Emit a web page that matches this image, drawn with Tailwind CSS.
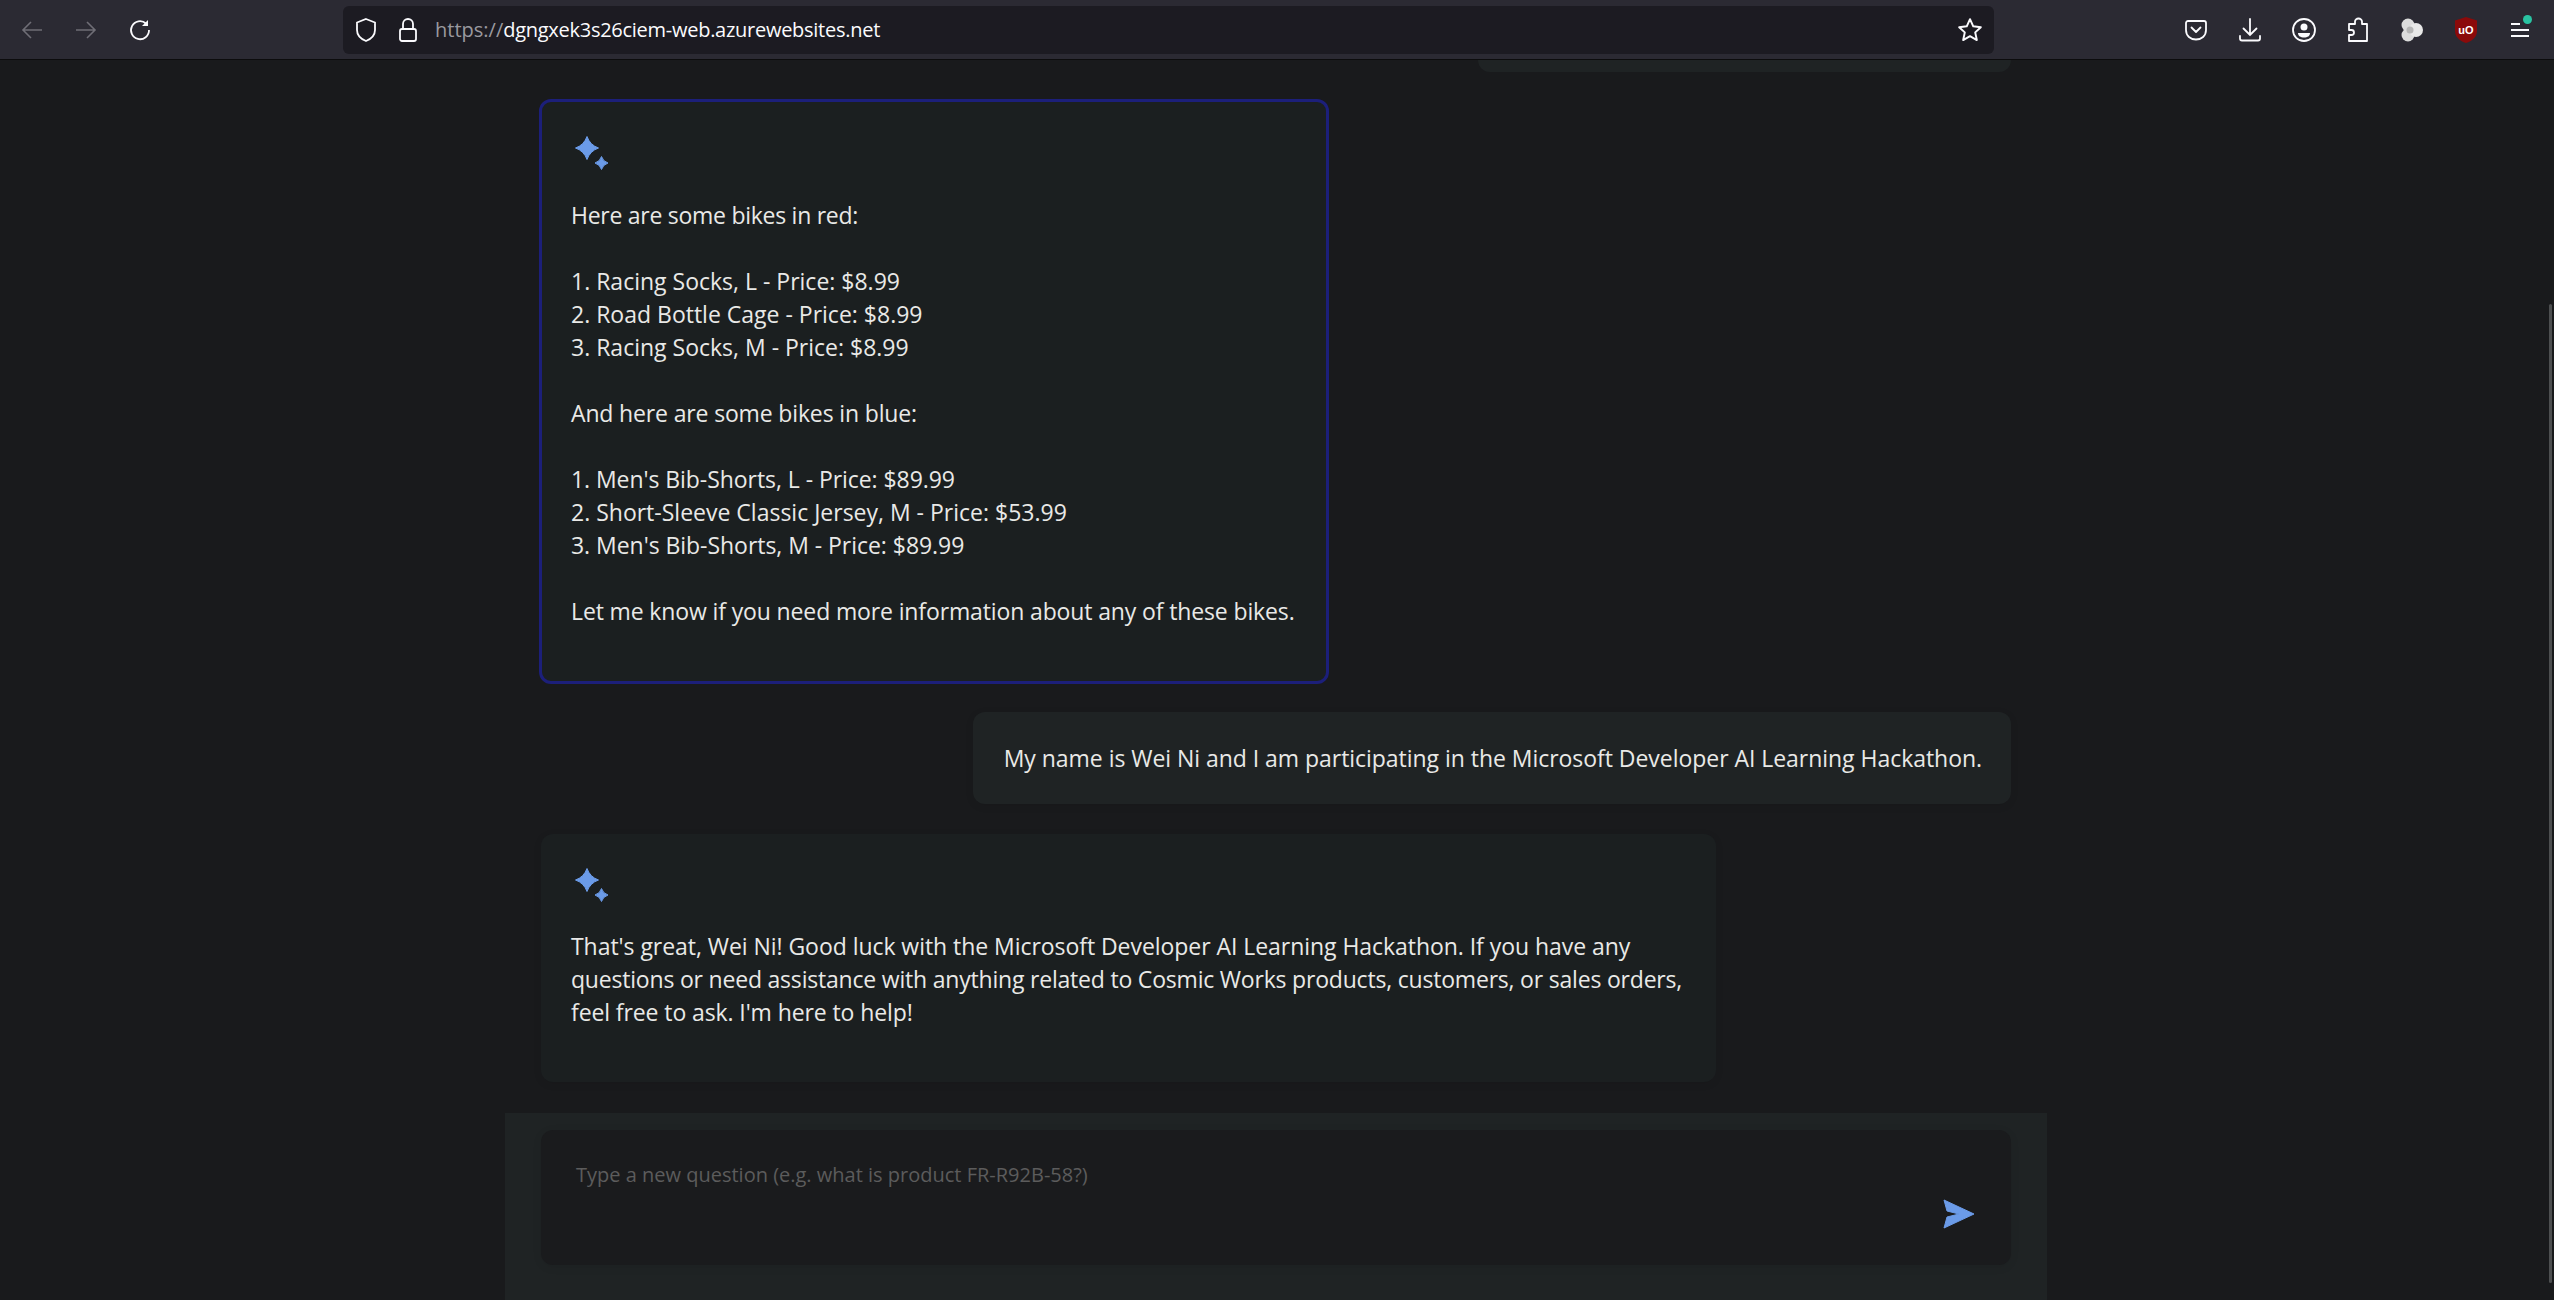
<!DOCTYPE html>
<html lang="en">
<head>
    <meta charset="UTF-8" />
    <title>Cosmic Works Chat</title>
    <script src="https://cdn.jsdelivr.net/npm/@tailwindcss/browser@4"></script>
</head>
<body class="h-screen overflow-hidden bg-[#191a1c] font-['Open_Sans',sans-serif] text-[#e9e9e7]">

    <!-- Browser toolbar -->
    <header class="h-[60px] flex items-center bg-[#2b2a33] border-b border-[#0c0c0d]">
        <div class="flex items-center w-[343px] pl-[20px] gap-[30px]">
            <svg class="w-6 h-6" viewBox="0 0 24 24" fill="none" stroke="#6f6e76" stroke-width="1.6"><path d="M22 12H3M11 4l-8 8 8 8"/></svg>
            <svg class="w-6 h-6" viewBox="0 0 24 24" fill="none" stroke="#6f6e76" stroke-width="1.6"><path d="M2 12h19M13 4l8 8-8 8"/></svg>
            <svg class="w-6 h-6" viewBox="0 0 24 24" fill="none" stroke="#fbfbfe" stroke-width="1.8"><path d="M18 5.500A9 9 0 1 0 21 12"/><path d="M20 2v6h-6z" fill="#fbfbfe" stroke="none"/></svg>
        </div>
        <div class="w-[1651px] h-[48px] rounded-md bg-[#1c1b22] flex items-center pl-[11px] pr-[11px]">
            <svg class="w-[24px] h-[26px]" viewBox="0 0 24 26" fill="none" stroke="#fbfbfe" stroke-width="1.8"><path d="M12 2l9 3.500V13c0 5-4 9-9 11-5-2-9-6-9-11V5.500z"/></svg>
            <svg class="w-[20px] h-[26px] ml-[20px]" viewBox="0 0 20 26" fill="none" stroke="#fbfbfe" stroke-width="1.8"><rect x="2" y="12" width="16" height="12" rx="2"/><path d="M5 12V7a5 5 0 0 1 10 0v5"/></svg>
            <span class="ml-[17px] text-[20px] text-[#9a999f]">https://<span class="text-[#fbfbfe] tracking-[-0.27px]">dgngxek3s26ciem-web.azurewebsites.net</span></span>
            <svg class="ml-auto w-[26px] h-[26px]" viewBox="0 0 24 24" fill="none" stroke="#fbfbfe" stroke-width="1.8" stroke-linejoin="round"><path d="M12 2l3 6.600 7 .8-5.200 4.800 1.500 7.100L12 17.700l-6.300 3.600 1.500-7.100L2 9.400l7-.8z"/></svg>
        </div>
        <div class="flex items-center pl-[189px] gap-[28px]">
            <!-- pocket -->
            <svg class="w-[26px] h-[26px]" viewBox="0 0 26 26" fill="none" stroke="#fbfbfe" stroke-width="1.8" stroke-linejoin="round" stroke-linecap="round"><path d="M5 4h16a2 2 0 0 1 2 2v7c0 6-4.500 9.500-10 9.500S3 19 3 13V6a2 2 0 0 1 2-2z"/><path d="M8.500 10.500l4.500 4.500 4.500-4.500"/></svg>
            <!-- downloads -->
            <svg class="w-[26px] h-[26px]" viewBox="0 0 26 26" fill="none" stroke="#fbfbfe" stroke-width="1.8" stroke-linecap="round"><path d="M13 2v16M6.500 11.500L13 18l6.500-6.500M3 19v2.500a2 2 0 0 0 2 2h16a2 2 0 0 0 2-2V19"/></svg>
            <!-- account -->
            <svg class="w-[26px] h-[26px]" viewBox="0 0 26 26" fill="none" stroke="#fbfbfe" stroke-width="1.8"><circle cx="13" cy="13" r="11"/><circle cx="13" cy="10" r="3.500" fill="#fbfbfe" stroke="none"/><path d="M7 16h12c0 3-2.500 4.500-6 4.500S7 19 7 16z" fill="#fbfbfe" stroke="none"/></svg>
            <!-- extensions -->
            <svg class="w-[26px] h-[26px]" viewBox="0 0 26 26" fill="none" stroke="#fbfbfe" stroke-width="1.8" stroke-linejoin="round"><path d="M10 7V4.500a3.500 3 0 0 1 7 0V7h5v17H4v-6h2.500a2.500 2.500 0 0 0 0-5H4V7z"/></svg>
            <!-- extension blob -->
            <svg class="w-[26px] h-[26px]" viewBox="0 0 26 26"><circle cx="9" cy="8" r="6.500" fill="#dcdcdc"/><circle cx="9" cy="18" r="6.500" fill="#dcdcdc"/><circle cx="17" cy="13" r="7" fill="#e8e8e8"/><circle cx="11" cy="13" r="3.500" fill="#b5b5b5"/></svg>
            <!-- uBlock -->
            <svg class="w-[26px] h-[28px]" viewBox="0 0 26 28"><path d="M13 1l11 3.500V15c0 6-5 10-11 12C7 25 2 21 2 15V4.500z" fill="#8b0a0a"/><text x="13" y="18" text-anchor="middle" font-size="11" font-weight="700" fill="#fff" font-family="Liberation Sans">uO</text></svg>
            <!-- menu -->
            <div class="relative w-[26px] h-[26px] pl-[4px] flex flex-col justify-center gap-[4px]">
                <div class="h-[2px] w-[9px] bg-[#fbfbfe]"></div>
                <div class="h-[2px] w-[18px] bg-[#fbfbfe]"></div>
                <div class="h-[2px] w-[18px] bg-[#fbfbfe]"></div>
                <div class="absolute left-[16px] top-[-2px] w-[9px] h-[9px] rounded-full bg-[#2ac3a2]"></div>
            </div>
        </div>
    </header>

    <!-- Chat -->
    <main class="relative h-[1240px] overflow-hidden">
        <div class="ml-[505px] w-[1542px] h-full flex flex-col">
            <div class="flex flex-col items-start px-[36px]">
                <div class="self-end w-[533px] h-[12px] bg-[#1f2324] rounded-b-xl"></div>

                <div class="mt-[27px] w-[790px] h-[585px] -ml-[2px] px-[29px] pt-[32px] bg-[#1b1f20] border-[3px] border-[#1c1f7a] rounded-xl text-[23px] leading-[33px] whitespace-nowrap">
                    <svg class="w-[38px] h-[36px] mb-[29px]" viewBox="0 0 38 36" fill="#6b9be8" stroke="#6b9be8" stroke-width="1" stroke-linejoin="round"><path d="M16 2.500Q19 11 27.500 14 19 17 16 25.500 13 17 4.500 14 13 11 16 2.500z"/><path d="M30.500 22.500Q32 27.500 37 29 32 30.500 30.500 35.500 29 30.500 24 29 29 27.500 30.500 22.500z"/></svg>
                    <p class="tracking-[-0.27px]">Here are some bikes in red:</p>
                    <p class="mt-[33px]">1. Racing Socks, L - Price: $8.99</p>
                    <p>2. Road Bottle Cage - Price: $8.99</p>
                    <p>3. Racing Socks, M - Price: $8.99</p>
                    <p class="mt-[33px] tracking-[-0.15px]">And here are some bikes in blue:</p>
                    <p class="mt-[33px] tracking-[-0.06px]">1. Men's Bib-Shorts, L - Price: $89.99</p>
                    <p>2. Short-Sleeve Classic Jersey, M - Price: $53.99</p>
                    <p class="tracking-[-0.04px]">3. Men's Bib-Shorts, M - Price: $89.99</p>
                    <p class="mt-[33px] tracking-[-0.13px]">Let me know if you need more information about any of these bikes.</p>
                </div>

                <div class="mt-[28px] self-end w-[1038px] h-[92px] flex items-center justify-end pr-[29px] bg-[#1f2324] rounded-xl text-[23px] leading-[33px] tracking-[-0.04px] shadow-[0_2px_8px_rgba(0,0,0,0.08)]">
                    My name is Wei Ni and I am participating in the Microsoft Developer AI Learning Hackathon.
                </div>

                <div class="mt-[30px] w-[1175px] h-[248px] px-[30px] pt-[32px] bg-[#1b1f20] rounded-xl text-[23px] leading-[33px] whitespace-nowrap shadow-[0_2px_8px_rgba(0,0,0,0.08)]">
                    <svg class="w-[38px] h-[36px] mb-[28px]" viewBox="0 0 38 36" fill="#6b9be8" stroke="#6b9be8" stroke-width="1" stroke-linejoin="round"><path d="M16 2.500Q19 11 27.500 14 19 17 16 25.500 13 17 4.500 14 13 11 16 2.500z"/><path d="M30.500 22.500Q32 27.500 37 29 32 30.500 30.500 35.500 29 30.500 24 29 29 27.500 30.500 22.500z"/></svg>
                    <p>
                        <span class="block tracking-[-0.05px]">That's great, Wei Ni! Good luck with the Microsoft Developer AI Learning Hackathon. If you have any</span>
                        <span class="block tracking-[-0.2px]">questions or need assistance with anything related to Cosmic Works products, customers, or sales orders,</span>
                        <span class="block tracking-[-0.1px]">feel free to ask. I'm here to help!</span>
                    </p>
                </div>
            </div>

            <!-- Question box -->
            <div class="mt-[31px] flex-1 bg-[#1f2324] px-[36px] pt-[17px]">
                <div class="h-[135px] rounded-xl bg-[#1a1b1d] flex justify-between pl-[35px] pr-[36px] shadow-[0_2px_10px_rgba(0,0,0,0.08)]">
                    <span class="pt-[31px] text-[20px] leading-[28px] text-[#5c5c5c]">Type a new question (e.g. what is product FR-R92B-58?)</span>
                    <svg class="mt-[69px] w-[32px] h-[30px]" viewBox="0 0 32 30" fill="#6b9be8" stroke="#6b9be8" stroke-width="1" stroke-linejoin="round"><path d="M1 1L31 15 1 29 4 18 16 15 4 12z"/></svg>
                </div>
            </div>
        </div>

        <!-- Scrollbar -->
        <div class="absolute right-[2px] top-[244px] bottom-[17px] w-[3px] rounded-full bg-[#4d4f50]"></div>
    </main>
</body>
</html>
